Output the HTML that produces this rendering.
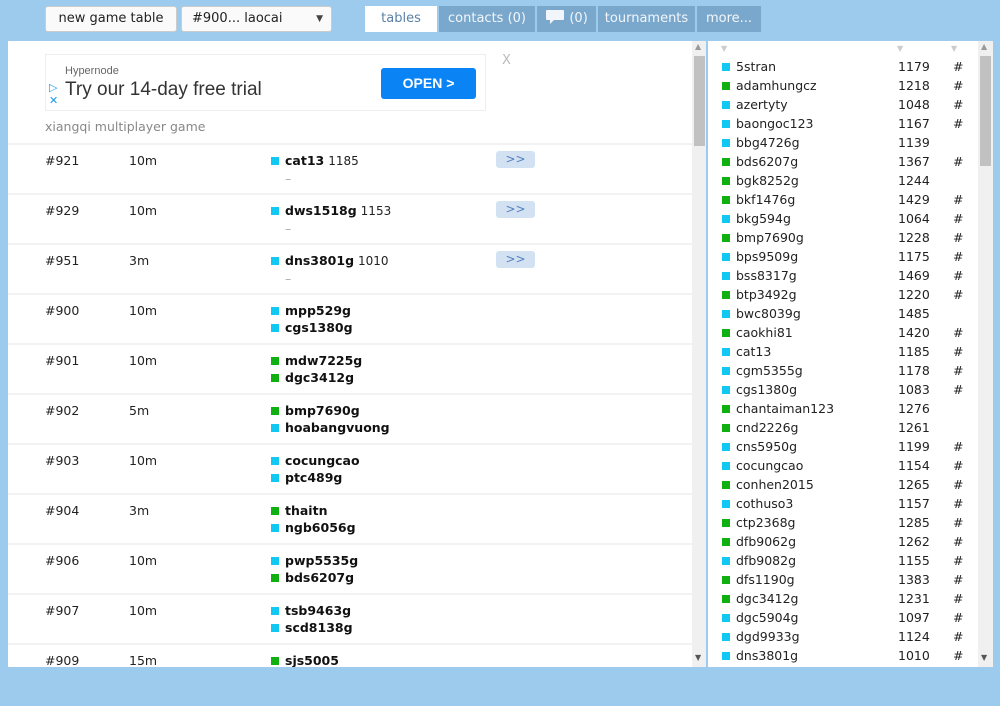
<!DOCTYPE html>
<html><head><meta charset="utf-8"><style>
*{margin:0;padding:0;box-sizing:border-box}
body{width:1000px;height:706px;background:#9ccbee;font-family:"DejaVu Sans","Liberation Sans",sans-serif;font-size:12.5px;color:#222;position:relative;overflow:hidden}
.abs{position:absolute}
.btn{position:absolute;top:6px;height:26px;background:#fafafa;border:1px solid #ccc;border-radius:3px;font-size:13px;line-height:24px}
.tab{position:absolute;top:6px;height:26px;background:#7aa8cc;color:#f2f6fa;font-size:13px;line-height:26px;text-align:center}
.panel{position:absolute;background:#fff}
.row{position:absolute;left:0;width:684px;height:50px;border-top:2px solid #f2f2f2}
.sq{display:inline-block;width:8px;height:8px;margin-right:6px;vertical-align:0px}
.c{background:#10c8f2}.g{background:#10b010}
.nm{font-weight:bold;color:#111}
.go{position:absolute;left:488px;top:6px;width:39px;height:17px;background:#d3e2f2;border-radius:3px;color:#5580c0;font-size:12px;text-align:center;line-height:16px}
.pl{position:absolute;left:14px;height:19px;line-height:19px;width:250px}
.sb{position:absolute;background:#f0f0f0}
.thumb{position:absolute;background:#c1c1c1}
.dash{position:absolute;left:277px;top:26px;color:#aaa}
</style></head><body>
<div class="btn" style="left:45px;width:132px;text-align:center">new game table</div>
<div class="btn" style="left:181px;width:151px;padding-left:10px">#900... laocai<span style="position:absolute;right:8px;font-size:9px;color:#444">▼</span></div>
<div class="tab" style="left:365px;width:72px;background:#fff;color:#5a82a6">tables</div>
<div class="tab" style="left:439px;width:96px">contacts (0)</div>
<div class="tab" style="left:537px;width:59px"><svg width="20" height="16" viewBox="0 0 20 16" style="vertical-align:-3px"><path d="M2 1h16a1 1 0 0 1 1 1v8a1 1 0 0 1-1 1H9l-4 4v-4H2a1 1 0 0 1-1-1V2a1 1 0 0 1 1-1z" fill="#f2f6fa"/></svg> (0)</div>
<div class="tab" style="left:598px;width:97px">tournaments</div>
<div class="tab" style="left:697px;width:64px">more...</div>

<div class="panel" style="left:8px;top:41px;width:698px;height:626px;overflow:hidden">
  <div class="abs" style="left:37px;top:13px;width:441px;height:57px;border:1px solid #eee">
    <div class="abs" style="left:19px;top:10px;font-family:'Liberation Sans',sans-serif;font-size:11px;color:#666">Hypernode</div>
    <div class="abs" style="left:19px;top:24px;font-family:'Liberation Sans',sans-serif;font-size:19px;color:#333">Try our 14-day free trial</div>
    <div class="abs" style="left:3px;top:26px;color:#1a9ae8;font-size:11px;line-height:13px">▷<br>✕</div>
    <div class="abs" style="left:335px;top:13px;width:95px;height:31px;background:#0a84f4;border-radius:3px;color:#fff;font-family:'Liberation Sans',sans-serif;font-size:14px;font-weight:bold;text-align:center;line-height:31px">OPEN &gt;</div>
  </div>
  <div class="abs" style="left:494px;top:12px;color:#bbb;font-size:13px">X</div>
  <div class="abs" style="left:37px;top:78px;color:#888;font-size:12.5px">xiangqi multiplayer game</div>

  <div class="row" style="top:102px"><span class="abs" style="left:37px;top:8px">#921</span><span class="abs" style="left:121px;top:8px">10m</span><span class="abs" style="left:263px;top:8px"><span class="sq c"></span><span class="nm">cat13</span> <span style="font-size:12px">1185</span></span><span class="dash">–</span><div class="go">&gt;&gt;</div></div>
  <div class="row" style="top:152px"><span class="abs" style="left:37px;top:8px">#929</span><span class="abs" style="left:121px;top:8px">10m</span><span class="abs" style="left:263px;top:8px"><span class="sq c"></span><span class="nm">dws1518g</span> <span style="font-size:12px">1153</span></span><span class="dash">–</span><div class="go">&gt;&gt;</div></div>
  <div class="row" style="top:202px"><span class="abs" style="left:37px;top:8px">#951</span><span class="abs" style="left:121px;top:8px">3m</span><span class="abs" style="left:263px;top:8px"><span class="sq c"></span><span class="nm">dns3801g</span> <span style="font-size:12px">1010</span></span><span class="dash">–</span><div class="go">&gt;&gt;</div></div>
  <div class="row" style="top:252px"><span class="abs" style="left:37px;top:8px">#900</span><span class="abs" style="left:121px;top:8px">10m</span><span class="abs" style="left:263px;top:8px"><span class="sq c"></span><span class="nm">mpp529g</span></span><span class="abs" style="left:263px;top:25px"><span class="sq c"></span><span class="nm">cgs1380g</span></span></div>
  <div class="row" style="top:302px"><span class="abs" style="left:37px;top:8px">#901</span><span class="abs" style="left:121px;top:8px">10m</span><span class="abs" style="left:263px;top:8px"><span class="sq g"></span><span class="nm">mdw7225g</span></span><span class="abs" style="left:263px;top:25px"><span class="sq g"></span><span class="nm">dgc3412g</span></span></div>
  <div class="row" style="top:352px"><span class="abs" style="left:37px;top:8px">#902</span><span class="abs" style="left:121px;top:8px">5m</span><span class="abs" style="left:263px;top:8px"><span class="sq g"></span><span class="nm">bmp7690g</span></span><span class="abs" style="left:263px;top:25px"><span class="sq c"></span><span class="nm">hoabangvuong</span></span></div>
  <div class="row" style="top:402px"><span class="abs" style="left:37px;top:8px">#903</span><span class="abs" style="left:121px;top:8px">10m</span><span class="abs" style="left:263px;top:8px"><span class="sq c"></span><span class="nm">cocungcao</span></span><span class="abs" style="left:263px;top:25px"><span class="sq c"></span><span class="nm">ptc489g</span></span></div>
  <div class="row" style="top:452px"><span class="abs" style="left:37px;top:8px">#904</span><span class="abs" style="left:121px;top:8px">3m</span><span class="abs" style="left:263px;top:8px"><span class="sq g"></span><span class="nm">thaitn</span></span><span class="abs" style="left:263px;top:25px"><span class="sq c"></span><span class="nm">ngb6056g</span></span></div>
  <div class="row" style="top:502px"><span class="abs" style="left:37px;top:8px">#906</span><span class="abs" style="left:121px;top:8px">10m</span><span class="abs" style="left:263px;top:8px"><span class="sq c"></span><span class="nm">pwp5535g</span></span><span class="abs" style="left:263px;top:25px"><span class="sq g"></span><span class="nm">bds6207g</span></span></div>
  <div class="row" style="top:552px"><span class="abs" style="left:37px;top:8px">#907</span><span class="abs" style="left:121px;top:8px">10m</span><span class="abs" style="left:263px;top:8px"><span class="sq c"></span><span class="nm">tsb9463g</span></span><span class="abs" style="left:263px;top:25px"><span class="sq c"></span><span class="nm">scd8138g</span></span></div>
  <div class="row" style="top:602px"><span class="abs" style="left:37px;top:8px">#909</span><span class="abs" style="left:121px;top:8px">15m</span><span class="abs" style="left:263px;top:8px"><span class="sq g"></span><span class="nm">sjs5005</span></span></div>

  <div class="sb" style="left:684px;top:0;width:14px;height:626px"></div>
  <div class="thumb" style="left:686px;top:15px;width:11px;height:90px"></div>
  <div class="abs" style="left:687px;top:1px;font-size:8px;color:#999">▲</div>
  <div class="abs" style="left:687px;top:612px;font-size:8px;color:#555">▼</div>
</div>

<div class="panel" style="left:708px;top:41px;width:285px;height:626px;overflow:hidden">
  <div class="abs" style="left:13px;top:3px;font-size:8px;color:#ccc">▼</div>
  <div class="abs" style="left:189px;top:3px;font-size:8px;color:#ccc">▼</div>
  <div class="abs" style="left:243px;top:3px;font-size:8px;color:#ccc">▼</div>
  <div class="abs" style="left:0;top:16px;width:270px">
<div class="pl" style="top:0px"><span class="sq c"></span>5stran<span class="abs" style="left:176px">1179</span><span class="abs" style="left:231px">#</span></div>
<div class="pl" style="top:19px"><span class="sq g"></span>adamhungcz<span class="abs" style="left:176px">1218</span><span class="abs" style="left:231px">#</span></div>
<div class="pl" style="top:38px"><span class="sq c"></span>azertyty<span class="abs" style="left:176px">1048</span><span class="abs" style="left:231px">#</span></div>
<div class="pl" style="top:57px"><span class="sq c"></span>baongoc123<span class="abs" style="left:176px">1167</span><span class="abs" style="left:231px">#</span></div>
<div class="pl" style="top:76px"><span class="sq c"></span>bbg4726g<span class="abs" style="left:176px">1139</span></div>
<div class="pl" style="top:95px"><span class="sq g"></span>bds6207g<span class="abs" style="left:176px">1367</span><span class="abs" style="left:231px">#</span></div>
<div class="pl" style="top:114px"><span class="sq g"></span>bgk8252g<span class="abs" style="left:176px">1244</span></div>
<div class="pl" style="top:133px"><span class="sq g"></span>bkf1476g<span class="abs" style="left:176px">1429</span><span class="abs" style="left:231px">#</span></div>
<div class="pl" style="top:152px"><span class="sq c"></span>bkg594g<span class="abs" style="left:176px">1064</span><span class="abs" style="left:231px">#</span></div>
<div class="pl" style="top:171px"><span class="sq g"></span>bmp7690g<span class="abs" style="left:176px">1228</span><span class="abs" style="left:231px">#</span></div>
<div class="pl" style="top:190px"><span class="sq c"></span>bps9509g<span class="abs" style="left:176px">1175</span><span class="abs" style="left:231px">#</span></div>
<div class="pl" style="top:209px"><span class="sq c"></span>bss8317g<span class="abs" style="left:176px">1469</span><span class="abs" style="left:231px">#</span></div>
<div class="pl" style="top:228px"><span class="sq g"></span>btp3492g<span class="abs" style="left:176px">1220</span><span class="abs" style="left:231px">#</span></div>
<div class="pl" style="top:247px"><span class="sq c"></span>bwc8039g<span class="abs" style="left:176px">1485</span></div>
<div class="pl" style="top:266px"><span class="sq g"></span>caokhi81<span class="abs" style="left:176px">1420</span><span class="abs" style="left:231px">#</span></div>
<div class="pl" style="top:285px"><span class="sq c"></span>cat13<span class="abs" style="left:176px">1185</span><span class="abs" style="left:231px">#</span></div>
<div class="pl" style="top:304px"><span class="sq c"></span>cgm5355g<span class="abs" style="left:176px">1178</span><span class="abs" style="left:231px">#</span></div>
<div class="pl" style="top:323px"><span class="sq c"></span>cgs1380g<span class="abs" style="left:176px">1083</span><span class="abs" style="left:231px">#</span></div>
<div class="pl" style="top:342px"><span class="sq g"></span>chantaiman123<span class="abs" style="left:176px">1276</span></div>
<div class="pl" style="top:361px"><span class="sq g"></span>cnd2226g<span class="abs" style="left:176px">1261</span></div>
<div class="pl" style="top:380px"><span class="sq c"></span>cns5950g<span class="abs" style="left:176px">1199</span><span class="abs" style="left:231px">#</span></div>
<div class="pl" style="top:399px"><span class="sq c"></span>cocungcao<span class="abs" style="left:176px">1154</span><span class="abs" style="left:231px">#</span></div>
<div class="pl" style="top:418px"><span class="sq g"></span>conhen2015<span class="abs" style="left:176px">1265</span><span class="abs" style="left:231px">#</span></div>
<div class="pl" style="top:437px"><span class="sq c"></span>cothuso3<span class="abs" style="left:176px">1157</span><span class="abs" style="left:231px">#</span></div>
<div class="pl" style="top:456px"><span class="sq g"></span>ctp2368g<span class="abs" style="left:176px">1285</span><span class="abs" style="left:231px">#</span></div>
<div class="pl" style="top:475px"><span class="sq g"></span>dfb9062g<span class="abs" style="left:176px">1262</span><span class="abs" style="left:231px">#</span></div>
<div class="pl" style="top:494px"><span class="sq c"></span>dfb9082g<span class="abs" style="left:176px">1155</span><span class="abs" style="left:231px">#</span></div>
<div class="pl" style="top:513px"><span class="sq g"></span>dfs1190g<span class="abs" style="left:176px">1383</span><span class="abs" style="left:231px">#</span></div>
<div class="pl" style="top:532px"><span class="sq g"></span>dgc3412g<span class="abs" style="left:176px">1231</span><span class="abs" style="left:231px">#</span></div>
<div class="pl" style="top:551px"><span class="sq c"></span>dgc5904g<span class="abs" style="left:176px">1097</span><span class="abs" style="left:231px">#</span></div>
<div class="pl" style="top:570px"><span class="sq c"></span>dgd9933g<span class="abs" style="left:176px">1124</span><span class="abs" style="left:231px">#</span></div>
<div class="pl" style="top:589px"><span class="sq c"></span>dns3801g<span class="abs" style="left:176px">1010</span><span class="abs" style="left:231px">#</span></div>
  </div>
  <div class="sb" style="left:270px;top:0;width:15px;height:626px"></div>
  <div class="thumb" style="left:272px;top:15px;width:11px;height:110px"></div>
  <div class="abs" style="left:273px;top:1px;font-size:8px;color:#999">▲</div>
  <div class="abs" style="left:273px;top:612px;font-size:8px;color:#555">▼</div>
</div>
</body></html>
